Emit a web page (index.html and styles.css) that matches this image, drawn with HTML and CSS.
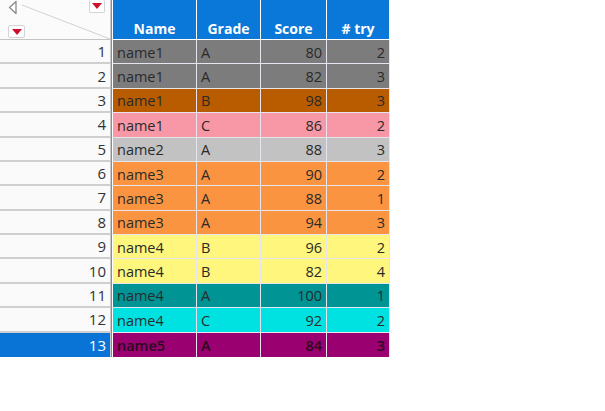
FILE: index.html
```html
<!DOCTYPE html>
<html>
<head>
<meta charset="utf-8">
<link rel="stylesheet" href="styles.css">
</head>
<body>
<div class="sheet">
  <div class="corner">
    <svg class="corner-art" width="110" height="40" viewBox="0 0 110 40">
      <line x1="22" y1="5" x2="110" y2="39" stroke="#d0d0d8" stroke-width="1"/>
      <path d="M16 1.5 L9.5 7.5 L16 13.5 Z" fill="#fff" stroke="#8a8a8a" stroke-width="1.3" stroke-linejoin="round"/>
    </svg>
    <span class="dd dd-top"><svg width="10" height="6" viewBox="0 0 10 6"><path d="M0 0 H10 L5 6 Z" fill="#d0102a"/></svg></span>
    <span class="dd dd-left"><svg width="10" height="6" viewBox="0 0 10 6"><path d="M0 0 H10 L5 6 Z" fill="#d0102a"/></svg></span>
  </div>
  <div class="sep"></div>
  <div class="hd">Name</div>
  <div class="hd">Grade</div>
  <div class="hd">Score</div>
  <div class="hd">#&nbsp;try</div>

  <div class="rn">1</div><div class="c gray">name1</div><div class="c gray">A</div><div class="c gray num">80</div><div class="c gray num">2</div>
  <div class="rn">2</div><div class="c gray">name1</div><div class="c gray">A</div><div class="c gray num">82</div><div class="c gray num">3</div>
  <div class="rn">3</div><div class="c brown">name1</div><div class="c brown">B</div><div class="c brown num">98</div><div class="c brown num">3</div>
  <div class="rn">4</div><div class="c pink">name1</div><div class="c pink">C</div><div class="c pink num">86</div><div class="c pink num">2</div>
  <div class="rn">5</div><div class="c silver">name2</div><div class="c silver">A</div><div class="c silver num">88</div><div class="c silver num">3</div>
  <div class="rn">6</div><div class="c orange">name3</div><div class="c orange">A</div><div class="c orange num">90</div><div class="c orange num">2</div>
  <div class="rn">7</div><div class="c orange">name3</div><div class="c orange">A</div><div class="c orange num">88</div><div class="c orange num">1</div>
  <div class="rn">8</div><div class="c orange">name3</div><div class="c orange">A</div><div class="c orange num">94</div><div class="c orange num">3</div>
  <div class="rn">9</div><div class="c yellow">name4</div><div class="c yellow">B</div><div class="c yellow num">96</div><div class="c yellow num">2</div>
  <div class="rn">10</div><div class="c yellow">name4</div><div class="c yellow">B</div><div class="c yellow num">82</div><div class="c yellow num">4</div>
  <div class="rn">11</div><div class="c teal">name4</div><div class="c teal">A</div><div class="c teal num">100</div><div class="c teal num">1</div>
  <div class="rn">12</div><div class="c cyan">name4</div><div class="c cyan">C</div><div class="c cyan num">92</div><div class="c cyan num">2</div>
  <div class="rn sel">13</div><div class="c purple strong">name5</div><div class="c purple strong">A</div><div class="c purple num strong">84</div><div class="c purple num strong">3</div>
</div>
</body>
</html>
```
FILE: styles.css
```css
html, body {
  margin: 0;
  padding: 0;
  background: #ffffff;
}
.sheet {
  display: grid;
  grid-template-columns: 110px 3px 84px 64px 66px 63px;
  grid-template-rows: 40px repeat(13, 24.38px);
  width: 390px;
  font-family: "Open Sans", "Noto Sans", sans-serif;
  font-size: 14.5px;
  color: #2a2a2a;
}
.corner {
  position: relative;
  background: #fbfbfb;
  border-bottom: 1px solid #c4c4c4;
  box-sizing: border-box;
}
.corner-art {
  position: absolute;
  left: 0;
  top: 0;
}
.dd {
  position: absolute;
  width: 16px;
  height: 13px;
  box-sizing: border-box;
  border: 1px solid #d4d4d4;
  border-radius: 2px;
  background: #fff;
  display: flex;
  align-items: center;
  justify-content: center;
}
.dd-top { left: 89px; top: 0; border-top: none; }
.dd-left { left: 8px; top: 25px; height: 13px; width: 17px; }
.sep {
  grid-column: 2;
  grid-row: 1 / span 14;
  background: linear-gradient(to right, #c8c8c8 0 1px, #8c8c8c 1px 2px, #ffffff 2px 3px);
}
.hd {
  background: #0a78d8;
  color: #ffffff;
  font-weight: 700;
  font-size: 14px;
  display: flex;
  align-items: flex-end;
  justify-content: center;
  padding-bottom: 1px;
  box-sizing: border-box;
  border-right: 1px solid #ffffff;
  border-bottom: 1px solid #ffffff;
}
.rn {
  background: #fafafa;
  border-bottom: 2px solid #cfcfcf;
  box-sizing: border-box;
  display: flex;
  align-items: center;
  justify-content: flex-end;
  padding-right: 4px;
  color: #333;
  font-size: 15px;
}
.rn.sel {
  background: #0a74d6;
  color: #ffffff;
  border-bottom: none;
}
.c {
  box-sizing: border-box;
  border-right: 1px solid #e6e4ee;
  border-bottom: 1px solid #e6e4ee;
  display: flex;
  align-items: center;
  padding: 1px 4px 0;
  white-space: nowrap;
}
.num { justify-content: flex-end; }
.strong { font-weight: 600; color: #2a0a20; }
.gray { background: #7c7c7c; }
.brown { background: #b95c00; }
.pink { background: #f898a6; }
.silver { background: #c2c2c2; }
.orange { background: #fb9440; }
.yellow { background: #fff67e; }
.teal { background: #009494; }
.cyan { background: #00e2e2; }
.purple { background: #9a0070; border-bottom: none; }
```
